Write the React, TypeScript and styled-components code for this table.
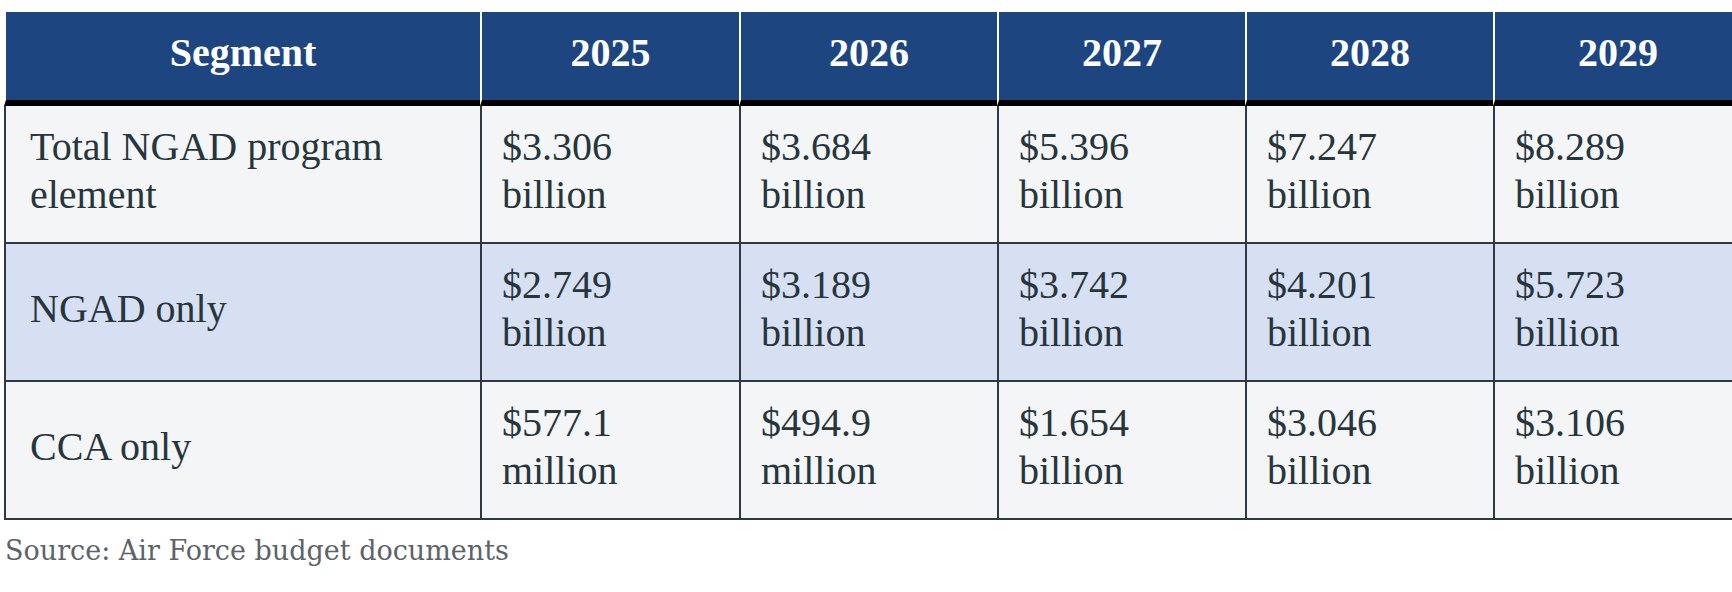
import styled, { createGlobalStyle } from "styled-components";

const GlobalStyle = createGlobalStyle`
  html, body {
    margin: 0;
    padding: 0;
    background: #ffffff;
    overflow: hidden;
  }
`;

const Figure = styled.figure`
  margin: 0;
  padding: 10px 0 0 4px;
  overflow: hidden;
`;

const Table = styled.table`
  width: 1737px;
  table-layout: fixed;
  border-collapse: separate;
  border-spacing: 0;
  font-family: "Liberation Serif", "Times New Roman", serif;
  font-size: 40px;
  line-height: 48px;
`;

const HeadCell = styled.th<{ $width: number }>`
  box-sizing: border-box;
  width: ${(p) => p.$width}px;
  padding: 17px 20px 23px;
  background: #1d4681;
  color: #ffffff;
  font-weight: 700;
  text-align: center;
  border-top: 2px solid #ffffff;
  border-left: 2px solid #ffffff;
  border-bottom: 6px solid #000000;
`;

const Row = styled.tr<{ $shade: boolean }>`
  background: ${(p) => (p.$shade ? "#d6e0f2" : "#f3f5f7")};
`;

const Cell = styled.td<{ $first?: boolean }>`
  box-sizing: border-box;
  padding: 17px 20px 23px ${(p) => (p.$first ? "24px" : "20px")};
  color: #27353d;
  vertical-align: middle;
  text-align: left;
  border-left: 2px solid #2c3a44;
  border-bottom: 2px solid #2c3a44;
`;

const Caption = styled.figcaption`
  margin: 13px 0 0 1px;
  font-family: "DejaVu Serif", Georgia, serif;
  font-size: 27px;
  line-height: 36px;
  color: #5d6367;
`;

const columns = [
  { label: "Segment", width: 476 },
  { label: "2025", width: 259 },
  { label: "2026", width: 258 },
  { label: "2027", width: 248 },
  { label: "2028", width: 248 },
  { label: "2029", width: 248 },
];

const rows = [
  {
    segment: "Total NGAD program element",
    values: [
      "$3.306 billion",
      "$3.684 billion",
      "$5.396 billion",
      "$7.247 billion",
      "$8.289 billion",
    ],
  },
  {
    segment: "NGAD only",
    values: [
      "$2.749 billion",
      "$3.189 billion",
      "$3.742 billion",
      "$4.201 billion",
      "$5.723 billion",
    ],
  },
  {
    segment: "CCA only",
    values: [
      "$577.1 million",
      "$494.9 million",
      "$1.654 billion",
      "$3.046 billion",
      "$3.106 billion",
    ],
  },
];

export default function App(): JSX.Element {
  return (
    <>
      <GlobalStyle />
      <Figure>
        <Table>
          <thead>
            <tr>
              {columns.map((c) => (
                <HeadCell key={c.label} $width={c.width}>
                  {c.label}
                </HeadCell>
              ))}
            </tr>
          </thead>
          <tbody>
            {rows.map((r, i) => (
              <Row key={r.segment} $shade={i === 1}>
                <Cell $first>{r.segment}</Cell>
                {r.values.map((v, j) => (
                  <Cell key={j}>{v}</Cell>
                ))}
              </Row>
            ))}
          </tbody>
        </Table>
        <Caption>Source: Air Force budget documents</Caption>
      </Figure>
    </>
  );
}
